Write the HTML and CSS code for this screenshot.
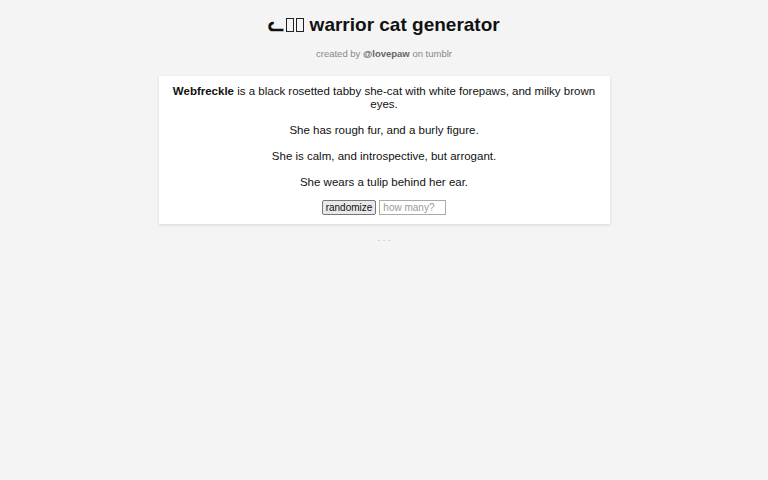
FILE: index.html
```html
<!DOCTYPE html>
<html lang="en">
<head>
    <meta charset="UTF-8">
    <meta name="viewport" content="width=device-width, initial-scale=1.0">
    <title>warrior cat generator</title>
    <link rel="stylesheet" href="styles.css">
</head>
<body>
    <h1 class="title">ᓚ<span class="tofu"></span><span class="tofu"></span> warrior cat generator</h1>
    <p class="credit">created by <b>@lovepaw</b> on tumblr</p>
    <div id="card">
        <div id="cats">
            <p><b>Webfreckle</b> is a black rosetted tabby she-cat with white forepaws, and milky brown eyes.</p>
            <p>She has rough fur, and a burly figure.</p>
            <p>She is calm, and introspective, but arrogant.</p>
            <p>She wears a tulip behind her ear.</p>
        </div>
        <div class="controls">
            <button id="randomize">randomize</button>
            <input type="text" inputmode="numeric" id="amount" placeholder="how many?">
        </div>
    </div>
    <div class="more">. . .</div>
</body>
</html>
```

FILE: styles.css
```css
body {
    margin: 0;
    background-color: #f4f4f4;
    color: #111;
    font-family: "Liberation Sans", Arial, sans-serif;
    font-size: 11.5px;
}
.title {
    margin: 14px 0 0;
    font-size: 19px;
    line-height: 22px;
    text-align: center;
}
/* the cat glyphs the font is missing */
.tofu {
    display: inline-block;
    width: 6px;
    height: 12px;
    margin-left: 2px;
    border: 1px solid #222;
    vertical-align: -1px;
}
.credit {
    margin: 12px 0 0;
    font-size: 9.5px;
    color: #888;
    text-align: center;
}
.credit b {
    color: #666;
}
#card {
    width: 427px;
    margin: 17px auto 0;
    padding: 9px 12px 9px;
    background-color: #fff;
    box-shadow: 0 1px 3px rgba(0, 0, 0, 0.12);
    text-align: center;
}
#cats p {
    margin: 0 0 13px;
    line-height: 13px;
}
.controls {
    display: flex;
    justify-content: center;
    gap: 3px;
    margin-top: -2px;
}
#randomize {
    font-family: "Liberation Sans", Arial, sans-serif;
    font-size: 10px;
    padding: 1px 3px;
    border: 1px solid #777;
    border-radius: 2px;
    background-color: #e9e9e9;
    color: #111;
}
#amount {
    width: 59px;
    font-family: "Liberation Sans", Arial, sans-serif;
    font-size: 10px;
    padding: 1px 3px;
    border: 1px solid #aaa;
}
#amount::placeholder {
    color: #999;
}
.more {
    margin-top: 9px;
    font-size: 9px;
    color: #aaa;
    text-align: center;
}
```
